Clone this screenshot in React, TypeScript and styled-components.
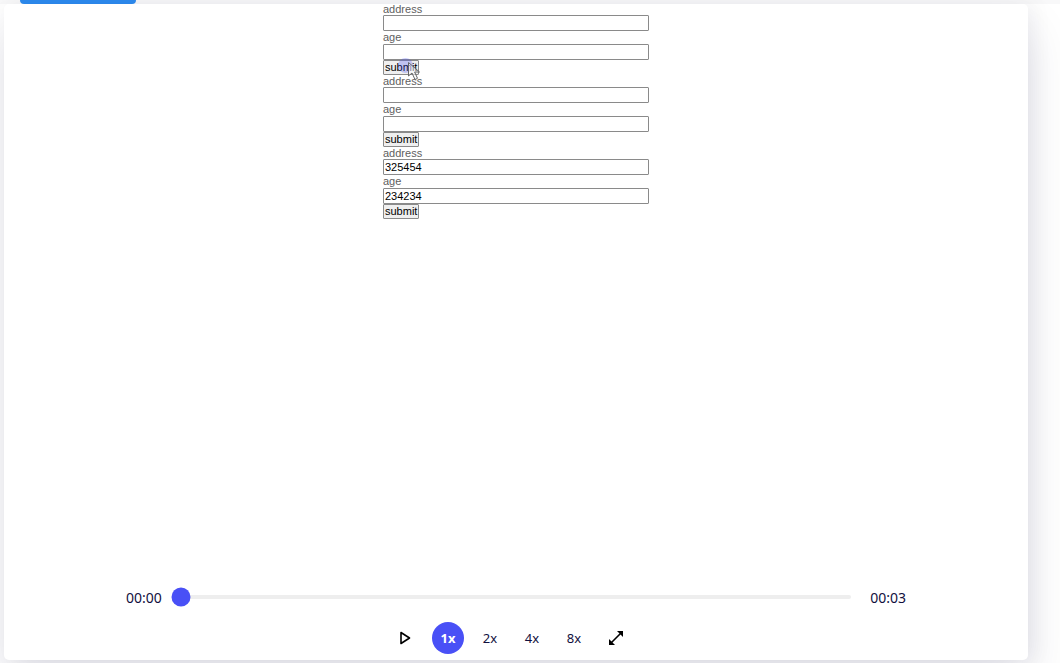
import React from 'react'
import styled, { createGlobalStyle } from 'styled-components'

const COLORS = {
  accent: 'rgb(73, 80, 246)',
  navy: '#11103e',
  track: '#eeeeee',
  strip: '#f8f8f9',
  blue: '#2d8cf0',
}

const GlobalStyle = createGlobalStyle`
  html, body {
    margin: 0;
    padding: 0;
    background: #ffffff;
    overflow: hidden;
  }
  body {
    font-family: "Noto Sans", "Open Sans", sans-serif;
  }
`

const Page = styled.div`
  width: 1060px;
  height: 663px;
  overflow: hidden;
  background: #ffffff;
`

const TopStrip = styled.div`
  height: 4px;
  background: ${COLORS.strip};
  overflow: hidden;
  padding-left: 20px;
`

const HiddenButton = styled.div`
  width: 116px;
  height: 32px;
  margin-top: -28px;
  border-radius: 4px;
  background: ${COLORS.blue};
`

const Player = styled.div`
  margin-left: 4px;
  width: 1024px;
  height: 656px;
  border-radius: 5px;
  background: #ffffff;
  box-shadow: 0 24px 48px rgba(17, 16, 62, 0.12), 6px 0 20px rgba(17, 16, 62, 0.05);
  display: flex;
  flex-direction: column;
  position: relative;
`

const Frame = styled.div`
  flex: 1;
  position: relative;
  padding-left: 379px;
`

const FormList = styled.div`
  margin-top: -1.5px;
`

const FormBlock = styled.div`
  display: flex;
  flex-direction: column;
  align-items: flex-start;
  width: 266px;
`

const Label = styled.div`
  height: 12.5px;
  line-height: 12.5px;
  font-family: "Liberation Sans", Arial, sans-serif;
  font-size: 11px;
  color: #606060;
`

const Input = styled.div`
  box-sizing: border-box;
  width: 266px;
  height: 16px;
  border: 1px solid #8a8a8a;
  border-radius: 1px;
  padding: 0 1px;
  font-family: "Liberation Sans", Arial, sans-serif;
  font-size: 11px;
  line-height: 14px;
  color: #000000;
  background: #ffffff;
`

const SubmitButton = styled.div`
  box-sizing: border-box;
  height: 15px;
  padding: 0 1px;
  border: 1px solid #8a8a8a;
  border-radius: 1px;
  background: #efefef;
  font-family: "Liberation Sans", Arial, sans-serif;
  font-size: 11px;
  line-height: 13px;
  color: #000000;
`

const ClickRipple = styled.div`
  position: absolute;
  left: 394px;
  top: 54px;
  width: 15px;
  height: 15px;
  border-radius: 50%;
  background: rgba(73, 80, 246, 0.28);
`

const CursorIcon = styled.svg`
  position: absolute;
  left: 403px;
  top: 57px;
`

const Controller = styled.div`
  height: 80px;
  display: flex;
  flex-direction: column;
  justify-content: space-around;
  align-items: center;
  border-radius: 0 0 5px 5px;
`

const Timeline = styled.div`
  width: 80%;
  display: flex;
  align-items: center;
`

const Time = styled.span`
  display: inline-block;
  width: 75px;
  text-align: center;
  font-size: 14px;
  color: ${COLORS.navy};
`

const Progress = styled.div`
  flex: 1;
  height: 4px;
  background: ${COLORS.track};
  position: relative;
  border-radius: 2px;
`

const Handler = styled.div`
  position: absolute;
  left: 0;
  top: 2px;
  width: 19px;
  height: 19px;
  border-radius: 50%;
  transform: translate(-50%, -50%);
  background: ${COLORS.accent};
`

const Buttons = styled.div`
  display: flex;
  align-items: center;
  justify-content: center;
  gap: 10px;
  padding-right: 11px;
  margin-bottom: -1px;
`

const CtrlButton = styled.button<{ $active?: boolean }>`
  width: 32px;
  height: 32px;
  padding: 0;
  display: flex;
  align-items: center;
  justify-content: center;
  border: none;
  border-radius: 50%;
  font-family: "Noto Sans", "Open Sans", sans-serif;
  font-size: 13px;
  font-weight: ${p => (p.$active ? 700 : 400)};
  color: ${p => (p.$active ? '#ffffff' : COLORS.navy)};
  background: ${p => (p.$active ? COLORS.accent : 'none')};
  cursor: pointer;
`

const PlayButton = styled(CtrlButton)`
  margin-right: 1px;
`

const forms = [
  { address: '', age: '' },
  { address: '', age: '' },
  { address: '325454', age: '234234' },
]

const speeds = ['1x', '2x', '4x', '8x']

const App: React.FC = () => {
  return (
    <Page>
      <GlobalStyle />
      <TopStrip>
        <HiddenButton />
      </TopStrip>
      <Player>
        <Frame>
          <FormList>
            {forms.map((f, i) => (
              <FormBlock key={`${i}`}>
                <Label>address</Label>
                <Input>{f.address}</Input>
                <Label>age</Label>
                <Input>{f.age}</Input>
                <SubmitButton>submit</SubmitButton>
              </FormBlock>
            ))}
          </FormList>
          <ClickRipple />
          <CursorIcon width="16" height="20" viewBox="0 0 16 20">
            <path
              d="M1.5 1.5 L1.5 15 L5 12 L8 18.5 L10.5 17.3 L7.6 11 L12.5 11 Z"
              fill="rgba(255,255,255,0.5)"
              stroke="#666"
              strokeWidth="1"
              strokeLinejoin="round"
            />
          </CursorIcon>
        </Frame>
        <Controller>
          <Timeline>
            <Time>00:00</Time>
            <Progress>
              <Handler />
            </Progress>
            <Time>00:03</Time>
          </Timeline>
          <Buttons>
            <PlayButton>
              <svg width="16" height="16" viewBox="0 0 16 16">
                <path
                  d="M4 2.5 L12.5 8 L4 13.5 Z"
                  fill="none"
                  stroke="#000"
                  strokeWidth="1.6"
                  strokeLinejoin="round"
                />
              </svg>
            </PlayButton>
            {speeds.map(s => (
              <CtrlButton key={s} $active={s === '1x'}>
                {s}
              </CtrlButton>
            ))}
            <CtrlButton>
              <svg width="16" height="16" viewBox="0 0 16 16">
                <path d="M2.5 13.5 L13.5 2.5" stroke="#000" strokeWidth="1.6" />
                <path d="M1 9 L1 15 L7 15 Z" fill="#000" />
                <path d="M9 1 L15 1 L15 7 Z" fill="#000" />
              </svg>
            </CtrlButton>
          </Buttons>
        </Controller>
      </Player>
    </Page>
  )
}

export default App
